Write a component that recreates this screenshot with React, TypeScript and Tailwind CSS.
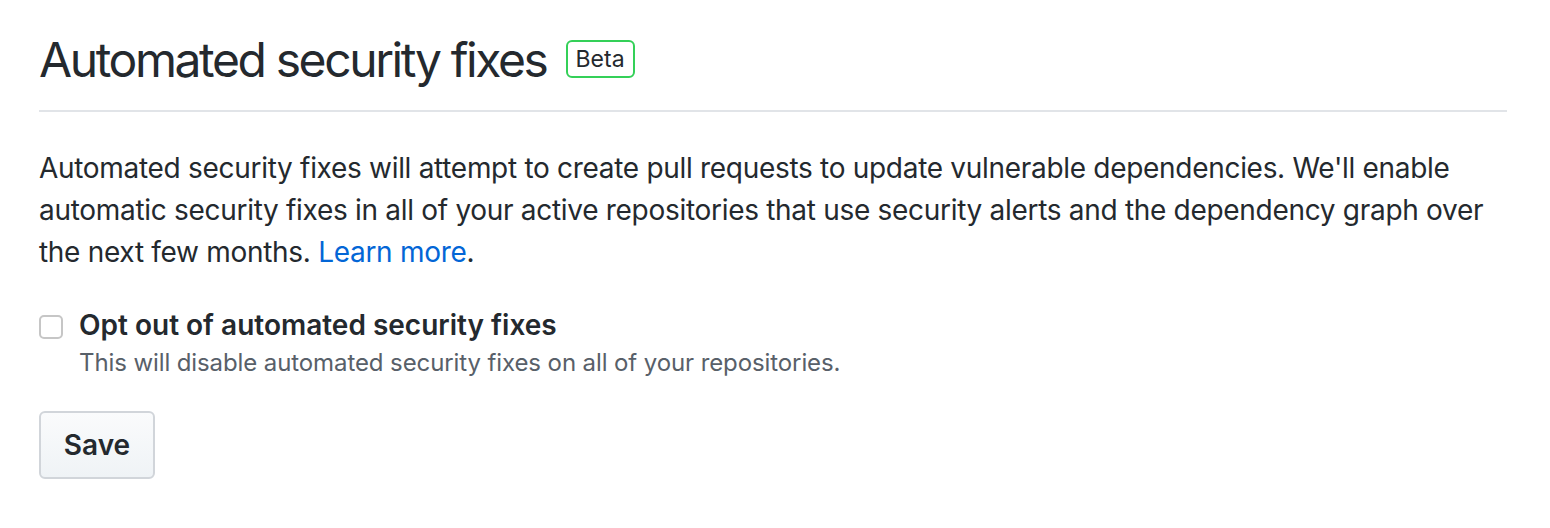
export default function App() {
  return (
    <div
      className="w-[1550px] h-[528px] bg-white text-[#24292e] pl-[39px] pr-[43px] pt-[30px]"
      style={{ fontFamily: 'Inter, "Liberation Sans", sans-serif' }}
    >
      {/* header */}
      <div className="flex items-center gap-[19px] pb-[20px] border-b-2 border-[#e1e4e8]">
        <h2 className="text-[48px] leading-[60px] font-normal tracking-[-2.4px]">Automated security fixes</h2>
        <span className="border-2 border-[#34d058] rounded-[6px] px-[8px] h-[38px] flex items-center text-[23px] mt-[-2px]">
          Beta
        </span>
      </div>

      <p className="mt-[35px] text-[28px] leading-[42px] tracking-[-0.3px]">
        Automated security fixes will attempt to create pull requests to update vulnerable dependencies. We'll enable
        <br />
        automatic security fixes in all of your active repositories that use security alerts and the dependency graph over
        <br />
        the next few months. <a className="text-[#0366d6]">Learn more</a>.
      </p>

      <div className="mt-[32px] flex gap-[16px]">
        <div className="mt-[10px] w-[24px] h-[24px] rounded-[5px] border-2 border-[#c6c6c6] bg-white shrink-0" />
        <div>
          <div className="text-[28px] leading-[40px] font-semibold">Opt out of automated security fixes</div>
          <div className="text-[24px] leading-[36px] text-[#586069] tracking-[-0.1px]">
            This will disable automated security fixes on all of your repositories.
          </div>
        </div>
      </div>

      <button className="mt-[30px] w-[116px] h-[68px] rounded-[6px] border-2 border-[#d1d5da] bg-gradient-to-b from-[#fafbfc] to-[#eff3f6] text-[28px] font-semibold">
        Save
      </button>
    </div>
  )
}
